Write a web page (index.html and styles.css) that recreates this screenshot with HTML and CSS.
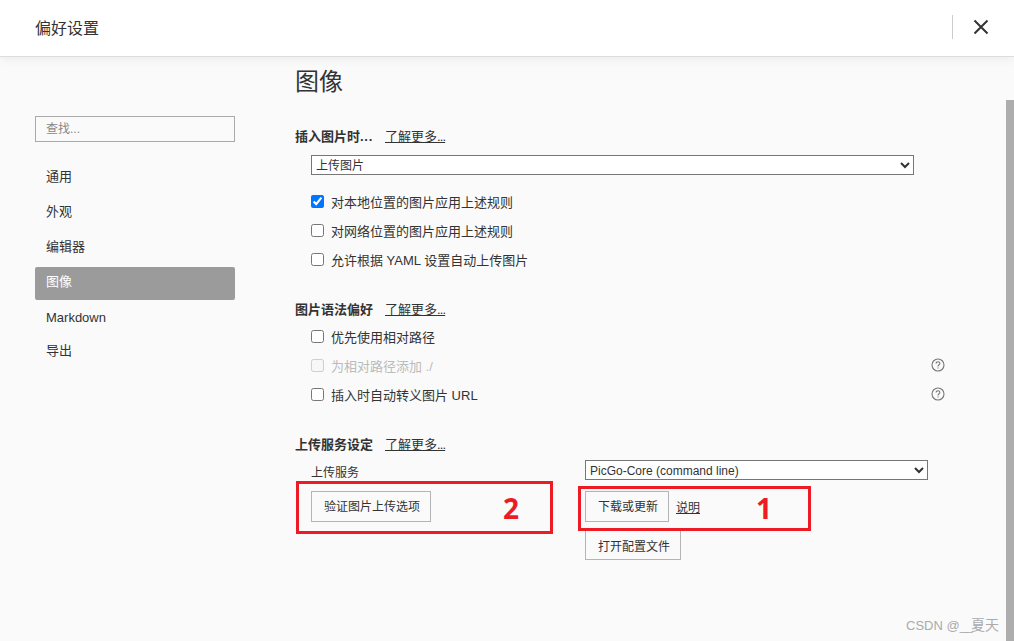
FILE: index.html
```html
<!DOCTYPE html>
<html lang="zh-CN">
<head>
<meta charset="utf-8">
<title>偏好设置</title>
<link rel="stylesheet" href="styles.css">
</head>
<body>
<div class="app">
  <header class="topbar">
    <div class="topbar-title">偏好设置</div>
    <div class="topbar-sep"></div>
    <button class="close-btn" aria-label="关闭">
      <svg width="16" height="16" viewBox="0 0 16 16"><path d="M1.5 1.5 14.5 14.5M14.5 1.5 1.5 14.5" stroke="#333" stroke-width="2" fill="none"/></svg>
    </button>
  </header>
  <div class="content">
    <aside class="sidebar">
      <input class="search" type="text" placeholder="查找...">
      <nav class="nav">
        <a class="nav-item">通用</a>
        <a class="nav-item">外观</a>
        <a class="nav-item">编辑器</a>
        <a class="nav-item active">图像</a>
        <a class="nav-item">Markdown</a>
        <a class="nav-item">导出</a>
      </nav>
    </aside>
    <main class="main">
      <h1 class="page-title">图像</h1>

      <div class="sec-head first"><strong>插入图片时<span class="dots-bold">...</span></strong><a class="link">了解更多<span class="dots">...</span></a></div>
      <select class="select wide"><option>上传图片</option></select>
      <div class="rows first-rows">
        <label class="row"><span class="check-label"><input type="checkbox" checked>对本地位置的图片应用上述规则</span></label>
        <label class="row"><span class="check-label"><input type="checkbox">对网络位置的图片应用上述规则</span></label>
        <label class="row"><span class="check-label"><input type="checkbox">允许根据 YAML 设置自动上传图片</span></label>
      </div>

      <div class="sec-head second"><strong>图片语法偏好</strong><a class="link">了解更多<span class="dots">...</span></a></div>
      <div class="rows second-rows">
        <label class="row"><span class="check-label"><input type="checkbox">优先使用相对路径</span></label>
        <label class="row disabled"><span class="check-label"><input type="checkbox" disabled>为相对路径添加 ./</span>
          <svg class="help" width="14" height="14" viewBox="0 0 14 14"><circle cx="7" cy="7" r="6" fill="none" stroke="#777" stroke-width="1.1"/><path d="M5.1 5.6C5.1 4.4 6 3.8 7 3.8S8.9 4.4 8.9 5.5C8.9 6.8 7 6.8 7 8.4M7 9.4V10.6" fill="none" stroke="#777" stroke-width="1.1"/></svg>
        </label>
        <label class="row"><span class="check-label"><input type="checkbox">插入时自动转义图片 URL</span>
          <svg class="help" width="14" height="14" viewBox="0 0 14 14"><circle cx="7" cy="7" r="6" fill="none" stroke="#777" stroke-width="1.1"/><path d="M5.1 5.6C5.1 4.4 6 3.8 7 3.8S8.9 4.4 8.9 5.5C8.9 6.8 7 6.8 7 8.4M7 9.4V10.6" fill="none" stroke="#777" stroke-width="1.1"/></svg>
        </label>
      </div>

      <div class="sec-head third"><strong>上传服务设定</strong><a class="link">了解更多<span class="dots">...</span></a></div>
      <div class="upload-grid">
        <div class="upload-label">上传服务</div>
        <select class="select narrow"><option>PicGo-Core (command line)</option></select>
        <div><button class="btn btn-verify">验证图片上传选项</button></div>
        <div class="actions">
          <div class="action-line"><button class="btn btn-update">下载或更新</button><a class="link">说明</a></div>
          <button class="btn btn-config">打开配置文件</button>
        </div>
      </div>
    </main>
    <div class="scroll-track"><div class="scroll-thumb"></div></div>
  </div>

  <div class="mark mark-two"></div>
  <div class="mark mark-one"></div>
  <div class="mark-num num-two">2</div>
  <div class="mark-num num-one">1</div>
  <div class="watermark">CSDN @<span class="wm-under">__</span><span class="wm-cjk">夏天</span></div>
</div>
</body>
</html>
```
FILE: styles.css
```css
* { box-sizing: border-box; }
html, body { margin: 0; height: 100%; overflow: hidden; }
body {
  font-family: "Liberation Sans", "Noto Sans CJK SC", sans-serif;
  font-size: 13px;
  color: #333;
  background: #fafafa;
}
.app { position: relative; display: flex; flex-direction: column; height: 641px; }

.topbar {
  position: relative;
  z-index: 2;
  flex: none;
  height: 57px;
  display: flex;
  align-items: center;
  padding: 0 25px 0 35px;
  background: #fff;
  border-bottom: 1px solid #ddd;
  box-shadow: 0 1px 10px rgba(0, 0, 0, .08);
}
.topbar-title { flex: 1; font-size: 16px; margin-top: -3px; }
.topbar-sep { width: 1px; height: 24px; margin: -2px 20px 0 0; background: #ccc; }
.close-btn { display: flex; padding: 0; border: 0; background: none; margin-top: -2px; }

.content { flex: 1; display: flex; min-height: 0; }

.sidebar { flex: none; width: 295px; padding: 59px 60px 0 35px; }
.search {
  display: block;
  width: 200px;
  height: 26px;
  padding: 0 10px;
  font: inherit;
  font-size: 12px;
  background: transparent;
  border: 1px solid #aaa;
  border-radius: 0;
}
.search::placeholder { color: #888; opacity: 1; }
.nav { display: flex; flex-direction: column; margin-top: 18px; }
.nav-item { height: 35px; line-height: 34px; padding-left: 11px; border-radius: 2px; }
.nav-item.active { height: 33px; line-height: 30px; margin: 2px 0 1px; background: #9b9b9b; color: #fff; }
.nav-item:last-child { margin-top: -2px; }

.main { flex: 1; min-width: 0; padding-top: 8px; }
.page-title { margin: 0; font-size: 24px; font-weight: 400; line-height: 34px; }
.sec-head { display: flex; gap: 12px; height: 20px; line-height: 22px; }
.sec-head strong { font-weight: 700; min-width: 78px; }
.sec-head.first { margin-top: 27px; }
.sec-head.second { margin-top: 25px; }
.sec-head.third { margin-top: 25px; }
.link { color: #333; text-decoration: underline; }
.dots { letter-spacing: -.9px; }
.dots-bold { letter-spacing: .7px; }

.select {
  display: block;
  height: 20px;
  padding: 1px 0 0;
  font: inherit;
  font-size: 12px;
  color: #333;
  background: #fff;
  border: 1px solid #767676;
  border-radius: 0;
}
.select.wide { width: 603px; margin: 9px 0 0 16px; }
.select.narrow { width: 343px; }

.rows { width: 634px; margin-left: 16px; }
.rows.first-rows { margin-top: 12px; }
.rows.second-rows { margin-top: 3px; }
.row { display: flex; align-items: center; justify-content: space-between; height: 29px; }
.check-label { display: flex; align-items: center; gap: 7px; }
.check-label input { width: 13px; height: 13px; margin: 0; flex: none; }
.row.disabled { color: #bbb; }
.help { margin-bottom: 1px; }

.upload-grid {
  display: grid;
  grid-template-columns: 274px 343px;
  grid-template-rows: 26px auto;
  row-gap: 5px;
  margin: 6px 0 0 16px;
}
.upload-label { line-height: 26px; font-size: 12px; }
.btn {
  display: block;
  height: 31px;
  padding: 0 10px 2px 12px;
  font: inherit;
  font-size: 12px;
  color: #333;
  background: transparent;
  border: 1px solid #b4b4b4;
  border-radius: 0;
}
.actions { display: flex; flex-direction: column; align-items: flex-start; gap: 8px; }
.action-line { display: flex; align-items: center; gap: 7px; }
.action-line .link { font-size: 12px; }
.btn-config { height: 30px; padding-bottom: 0; }

.scroll-track { flex: none; width: 8px; padding-top: 43px; }
.scroll-thumb { height: 100%; background: #adadad; }

.mark { position: absolute; border: 3px solid #ed1c24; }
.mark-two { left: 296px; top: 481px; width: 257px; height: 53px; }
.mark-one { left: 578px; top: 486px; width: 233px; height: 45px; }
.mark-num {
  position: absolute;
  font-family: "Noto Sans", sans-serif;
  font-size: 28px;
  font-weight: 700;
  line-height: 30px;
  color: #ed1c24;
}
.num-two { left: 503px; top: 493px; }
.num-one { left: 756px; top: 493px; }
.watermark {
  position: absolute;
  left: 906px;
  top: 616px;
  font-size: 13px;
  line-height: 18px;
  color: #aaa;
}
.wm-under { letter-spacing: -1.6px; }
.wm-cjk { font-size: 14px; }
```
